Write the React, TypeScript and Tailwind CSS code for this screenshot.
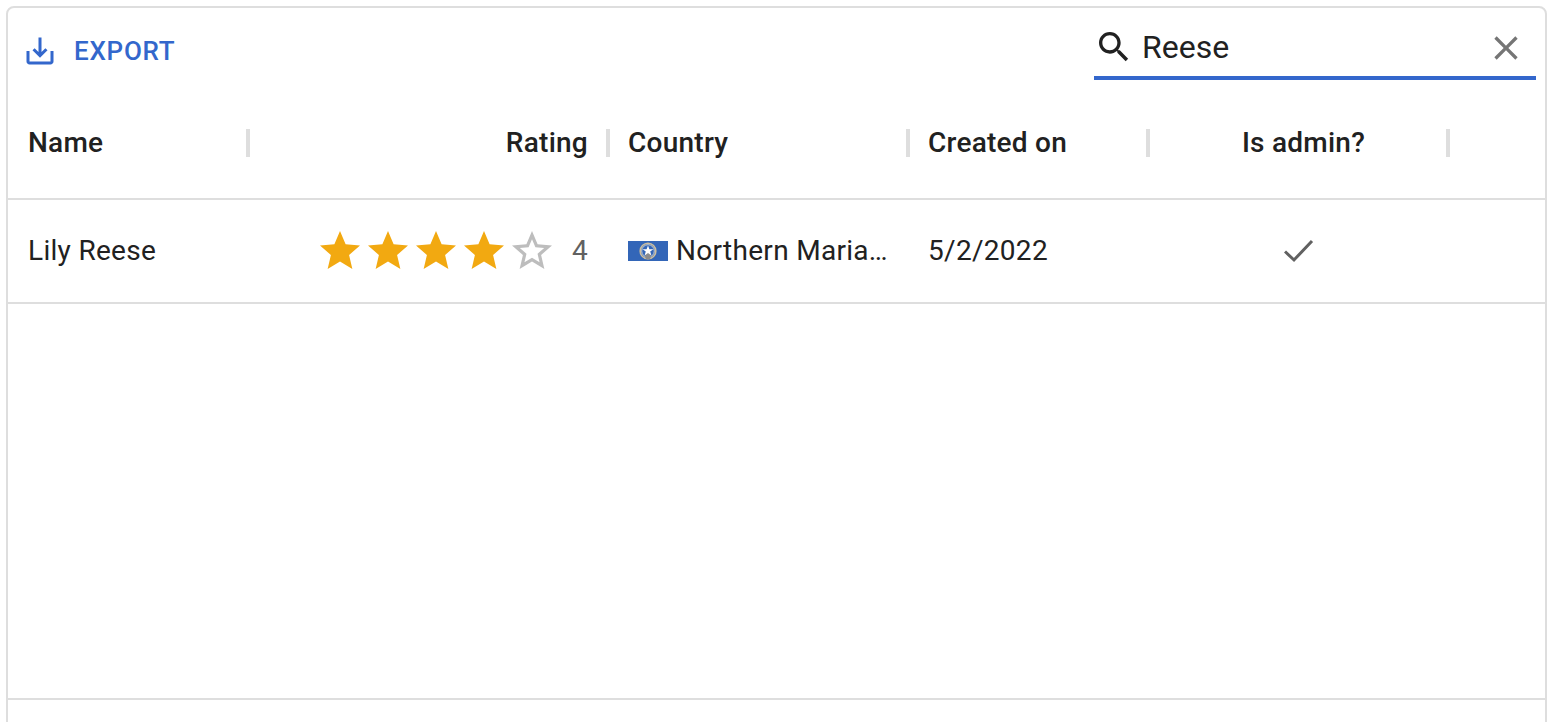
const STAR = "M12 17.27 18.18 21l-1.64-7.03L22 9.24l-7.19-.61L12 2 9.19 8.63 2 9.24l5.46 4.73L5.82 21z";
const STAR_BORDER = "M22 9.24l-7.19-.62L12 2 9.19 8.63 2 9.24l5.46 4.73L5.82 21 12 17.27 18.18 21l-1.63-7.03L22 9.24zM12 15.4l-3.76 2.27 1-4.28-3.32-2.88 4.38-.38L12 6.1l1.71 4.04 4.38.38-3.32 2.88 1 4.28L12 15.4z";

function Icon({ d, className }: { d: string; className: string }) {
  return (
    <svg viewBox="0 0 24 24" fill="currentColor" className={className}>
      <path d={d} />
    </svg>
  );
}

function Flag() {
  return (
    <svg viewBox="0 0 40 20" className="w-[40px] h-[20px] shrink-0">
      <rect width="40" height="20" fill="#3366b8" />
      <circle cx="20" cy="10" r="7.8" fill="none" stroke="#cdbf9f" strokeWidth="1.6" />
      <circle cx="20" cy="10" r="6.3" fill="none" stroke="#e8e4d8" strokeWidth="0.8" />
      <rect x="17.2" y="11" width="5.6" height="7.5" rx="2.4" fill="#8b8b8b" />
      <path d="M20 4.4l1.4 3.8h4l-3.2 2.4 1.2 3.8-3.4-2.4-3.4 2.4 1.2-3.8-3.2-2.4h4z" fill="#ffffff" />
    </svg>
  );
}

function HeaderCell({ label, textClass }: { label: string; textClass: string }) {
  return (
    <div className="flex items-center h-full">
      <div className={`flex-1 ${textClass}`}>{label}</div>
      <div className="w-[4px] h-[28px] bg-[#dedede] shrink-0" />
    </div>
  );
}

const COLS = "grid grid-cols-[242px_360px_300px_240px_300px]";

export default function App() {
  return (
    <div className="h-[722px] overflow-hidden bg-white pt-[6px] pl-[6px] font-['Roboto',sans-serif] text-[#212121]">
      <div className="w-[1541px] h-[740px] border-2 border-[#dedede] rounded-[8px] flex flex-col">
        <div className="h-[80px] flex items-start justify-between shrink-0">
          <div className="flex items-center mt-[25px] ml-[14px] text-[#3367cc]">
            <Icon
              d="M19 12v7H5v-7H3v7c0 1.1.9 2 2 2h14c1.1 0 2-.9 2-2v-7h-2zm-6 .67l2.59-2.58L17 11.5l-5 5-5-5 1.41-1.41L11 12.67V3h2z"
              className="w-[36px] h-[36px]"
            />
            <span className="ml-[16px] text-[26px] font-medium tracking-[0.74px] leading-[36px]">EXPORT</span>
          </div>
          <div className="w-[442px] h-[72px] mr-[9px] pt-[10px] border-b-4 border-[#3367cc] flex items-center text-[32px]">
            <Icon
              d="M15.5 14h-.79l-.28-.27C15.41 12.59 16 11.11 16 9.5 16 5.91 13.09 3 9.5 3S3 5.91 3 9.5 5.91 16 9.5 16c1.61 0 3.09-.59 4.23-1.57l.27.28v.79l5 4.99L20.49 19l-4.99-5zm-6 0C7.01 14 5 11.99 5 9.5S7.01 5 9.5 5 14 7.01 14 9.5 11.99 14 9.5 14z"
              className="w-[40px] h-[40px] text-[#212121] shrink-0"
            />
            <span className="ml-[8px] flex-1">Reese</span>
            <Icon
              d="M19 6.41 17.59 5 12 10.59 6.41 5 5 6.41 10.59 12 5 17.59 6.41 19 12 13.41 17.59 19 19 17.59 13.41 12z"
              className="w-[40px] h-[40px] text-[#757575] mr-[10px] mt-[2px] shrink-0"
            />
          </div>
        </div>

        <div className={`${COLS} h-[112px] border-b-2 border-[#dedede] text-[28px] tracking-[0.25px] font-medium shrink-0`}>
          <HeaderCell label="Name" textClass="pl-[20px] text-left" />
          <HeaderCell label="Rating" textClass="pl-[18px] pr-[18px] text-right" />
          <HeaderCell label="Country" textClass="pl-[18px] pr-[19px] text-left" />
          <HeaderCell label="Created on" textClass="pl-[18px] pr-[19px] text-left" />
          <HeaderCell label="Is admin?" textClass="pl-[30px] pr-[19px] text-center" />
        </div>

        <div className={`${COLS} h-[104px] border-b-2 border-[#dedede] text-[28px] tracking-[0.3px] items-center shrink-0`}>
          <div className="pl-[20px]">Lily Reese</div>
          <div className="flex items-center justify-end pr-[22px]">
            <div className="flex text-[#f2a911]">
              <Icon d={STAR} className="w-[48px] h-[48px]" />
              <Icon d={STAR} className="w-[48px] h-[48px]" />
              <Icon d={STAR} className="w-[48px] h-[48px]" />
              <Icon d={STAR} className="w-[48px] h-[48px]" />
              <Icon d={STAR_BORDER} className="w-[48px] h-[48px] text-[#bdbdbd]" />
            </div>
            <span className="ml-[16px] text-[#616161]">4</span>
          </div>
          <div className="flex items-center pl-[18px] pr-[22px] min-w-0">
            <Flag />
            <span className="ml-[8px] truncate">Northern Mariana Islands</span>
          </div>
          <div className="pl-[18px]">5/2/2022</div>
          <div className="flex justify-center pr-[3px]">
            <svg viewBox="0 0 30 24" className="w-[30px] h-[24px] text-[#616161]" fill="none" stroke="currentColor" strokeWidth="3">
              <path d="M1 12.5l9 8.5L28 2" />
            </svg>
          </div>
        </div>

        <div className="h-[396px] border-b-2 border-[#dedede] shrink-0" />
      </div>
    </div>
  );
}
